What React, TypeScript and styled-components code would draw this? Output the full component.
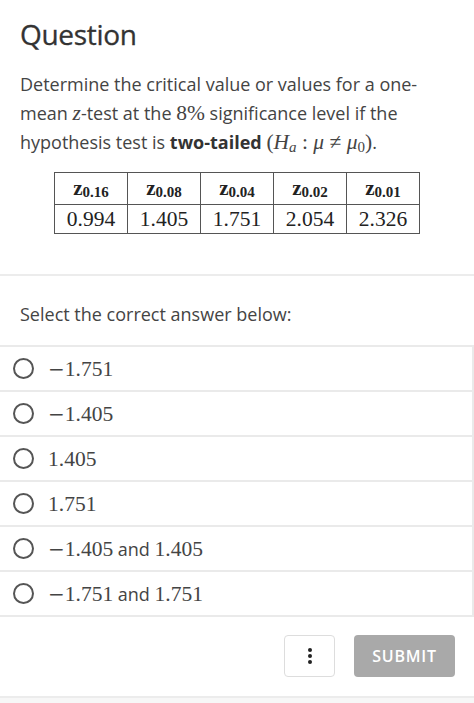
import React from "react";
import styled, { createGlobalStyle } from "styled-components";

const GlobalStyle = createGlobalStyle`
  html, body {
    margin: 0;
    padding: 0;
    background: #ffffff;
  }
  body {
    font-family: "Open Sans", "Noto Sans", sans-serif;
    color: #333333;
  }
`;

const Page = styled.div`
  width: 474px;
  height: 703px;
  overflow: hidden;
  display: flex;
  flex-direction: column;
`;

const QuestionBlock = styled.section`
  padding: 16px 20px 40px 20px;
  border-bottom: 2px solid #ececec;
`;

const Title = styled.h1`
  margin: 0;
  font-size: 28px;
  font-weight: 400;
  line-height: 36px;
  color: #333333;
  letter-spacing: -0.3px;
  -webkit-text-stroke: 0.3px #333333;
`;

const Prompt = styled.p`
  margin: 18px 0 0 0;
  font-size: 18px;
  line-height: 29px;
  color: #444444;
  width: 420px;
`;

const M = styled.span<{ $italic?: boolean }>`
  font-family: "Liberation Serif", "DejaVu Serif", serif;
  font-size: 21.5px;
  line-height: 1;
  font-style: ${(p) => (p.$italic ? "italic" : "normal")};
`;

const MinusSign = styled(M)`
  font-family: "DejaVu Serif", "Liberation Serif", serif;
  font-size: 20px;
`;

const MSub = styled.span<{ $italic?: boolean }>`
  font-family: "Liberation Serif", "DejaVu Serif", serif;
  font-size: 15px;
  line-height: 1;
  position: relative;
  top: 3px;
  font-style: ${(p) => (p.$italic ? "italic" : "normal")};
`;

const Strong = styled.b`
  font-weight: 700;
  color: #333333;
`;

const TableWrap = styled.div`
  display: flex;
  justify-content: center;
  margin-top: 15px;
`;

const Table = styled.table`
  border-collapse: collapse;
  font-family: "Liberation Serif", "DejaVu Serif", serif;
  color: #222222;
`;

const HeadCell = styled.th`
  border: 1.5px solid #555555;
  height: 31px;
  padding: 0 8px;
  font-size: 21px;
  font-weight: 700;
  text-align: center;
  width: 56px;
`;

const ValueCell = styled.td`
  border: 1.5px solid #555555;
  height: 28px;
  padding: 0 6px;
  font-size: 21.5px;
  text-align: center;
  line-height: 24px;
`;

const Sub = styled.sub`
  font-size: 15px;
  vertical-align: -2px;
`;

const AnswerBlock = styled.section`
  display: flex;
  flex-direction: column;
`;

const Instruction = styled.div`
  padding: 26px 20px 0 20px;
  height: 43px;
  font-size: 18px;
  line-height: 24px;
  color: #444444;
`;

const Options = styled.ul`
  list-style: none;
  margin: 0;
  padding: 0;
  width: 472px;
  border-top: 2px solid #eaeaea;
  border-right: 2px solid #eaeaea;
`;

const Option = styled.li`
  height: 43px;
  display: flex;
  align-items: center;
  gap: 14px;
  padding-left: 13px;
  border-bottom: 2px solid #eaeaea;
  font-size: 18px;
  color: #444444;
`;

const Radio = styled.span`
  width: 17px;
  height: 17px;
  border: 2.2px solid #555555;
  border-radius: 50%;
  flex: none;
`;

const Footer = styled.div`
  display: flex;
  justify-content: flex-end;
  align-items: flex-start;
  gap: 19px;
  padding: 18px 19px 0 0;
  height: 61px;
  border-bottom: 2px solid #ececec;
`;

const MoreButton = styled.button`
  width: 51px;
  height: 42px;
  border: 1px solid #dddddd;
  border-radius: 4px;
  background: #ffffff;
  display: flex;
  align-items: center;
  justify-content: center;
  padding: 0;
`;

const SubmitButton = styled.button`
  width: 101px;
  height: 42px;
  border: none;
  border-radius: 4px;
  background: #a9a9a9;
  color: #ffffff;
  font-family: "Open Sans", sans-serif;
  font-size: 16px;
  font-weight: 600;
  letter-spacing: 0.8px;
`;

const Rest = styled.div`
  flex: 1;
  background: #f7f7f7;
`;

const zHeads = ["0.16", "0.08", "0.04", "0.02", "0.01"];
const zValues = ["0.994", "1.405", "1.751", "2.054", "2.326"];

const Minus = () => <MinusSign>&minus;</MinusSign>;

const answers: React.ReactNode[] = [
  <><Minus /><M>1.751</M></>,
  <><Minus /><M>1.405</M></>,
  <M>1.405</M>,
  <M>1.751</M>,
  <><Minus /><M>1.405</M> and <M>1.405</M></>,
  <><Minus /><M>1.751</M> and <M>1.751</M></>,
];

export default function App() {
  return (
    <>
      <GlobalStyle />
      <Page>
        <QuestionBlock>
          <Title>Question</Title>
          <Prompt>
            Determine the critical value or values for a one-mean <M $italic>z</M>-test at the{" "}
            <M>8%</M> significance level if the hypothesis test is <Strong>two-tailed</Strong>{" "}
            <M>(</M>
            <M $italic>H</M>
            <MSub $italic>a</MSub>
            <M> : </M>
            <M $italic>μ</M>
            <M> ≠ </M>
            <M $italic>μ</M>
            <MSub>0</MSub>
            <M>)</M>.
          </Prompt>
          <TableWrap>
            <Table>
              <thead>
                <tr>
                  {zHeads.map((h) => (
                    <HeadCell key={h}>
                      z<Sub>{h}</Sub>
                    </HeadCell>
                  ))}
                </tr>
              </thead>
              <tbody>
                <tr>
                  {zValues.map((v) => (
                    <ValueCell key={v}>{v}</ValueCell>
                  ))}
                </tr>
              </tbody>
            </Table>
          </TableWrap>
        </QuestionBlock>
        <AnswerBlock>
          <Instruction>Select the correct answer below:</Instruction>
          <Options>
            {answers.map((a, i) => (
              <Option key={i}>
                <Radio />
                <span>{a}</span>
              </Option>
            ))}
          </Options>
        </AnswerBlock>
        <Footer>
          <MoreButton aria-label="more">
            <svg width="6" height="18" viewBox="0 0 6 18">
              <circle cx="3" cy="3" r="2" fill="#222" />
              <circle cx="3" cy="9" r="2" fill="#222" />
              <circle cx="3" cy="15" r="2" fill="#222" />
            </svg>
          </MoreButton>
          <SubmitButton>SUBMIT</SubmitButton>
        </Footer>
        <Rest />
      </Page>
    </>
  );
}
